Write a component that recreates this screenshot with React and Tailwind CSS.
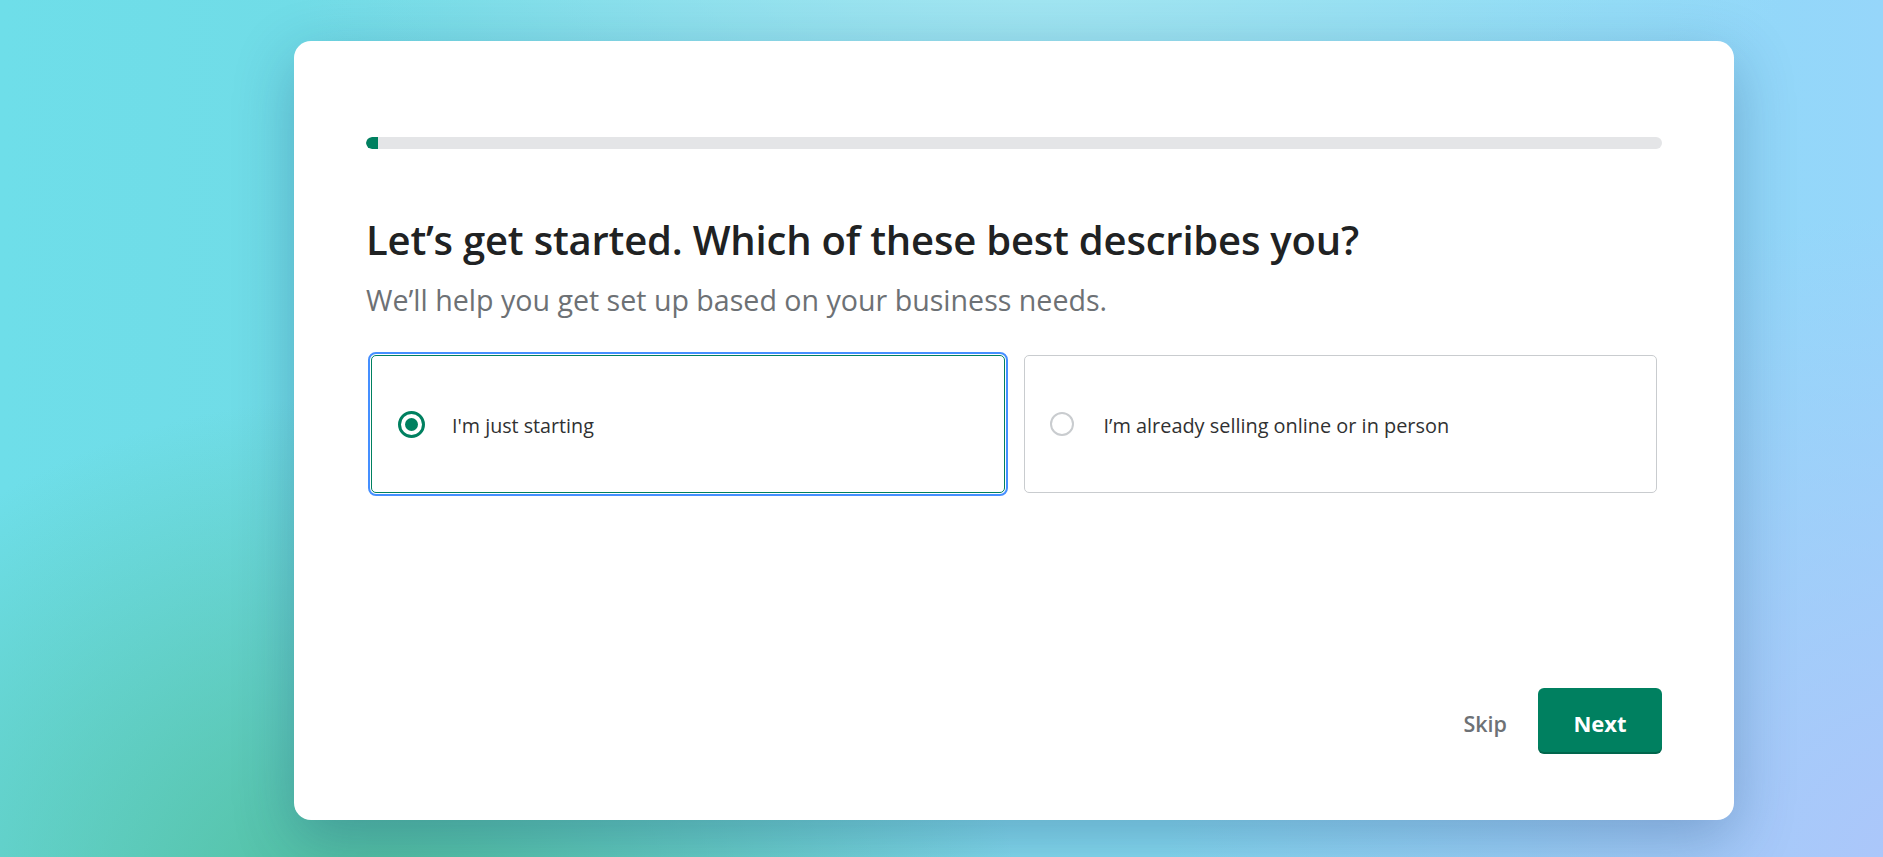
import React from "react";

export default function App() {
  const font = { fontFamily: '"Open Sans", "Noto Sans", sans-serif' };
  return (
    <div
      className="w-full h-[857px] overflow-hidden pt-[41px] pl-[294px] bg-[radial-gradient(ellipse_34%_60%_at_20%_106%,rgba(80,190,156,1),rgba(80,190,156,0.6)_40%,rgba(80,190,156,0)_100%),radial-gradient(ellipse_40%_75%_at_102%_100%,rgba(172,198,250,1),rgba(172,198,250,0)_100%),radial-gradient(ellipse_40%_40%_at_55%_-5%,rgba(168,232,242,0.9),rgba(168,232,242,0)_100%),linear-gradient(90deg,#6edee9_0%,#72dbe6_25%,#84daee_55%,#8cdaf7_80%,#96d6fa_100%)]"
      style={font}
    >
      <div className="w-[1440px] h-[779px] bg-white rounded-[17px] shadow-[0_18px_60px_rgba(20,60,110,0.3)] flex flex-col pt-[96px] px-[72px] pb-[66px]">
        {/* progress */}
        <div className="h-[12px] w-full rounded-full bg-[#e4e5e7] overflow-hidden">
          <div className="h-full w-[12px] rounded-l-full bg-[#008060]" />
        </div>

        <h1 className="mt-[67px] text-[40px] leading-[48px] font-semibold text-[#202223] tracking-[-0.005em]">
          Let’s get started. Which of these best describes you?
        </h1>
        <p className="mt-[18px] text-[28.6px] leading-[36px] text-[#6d7175]">
          We’ll help you get set up based on your business needs.
        </p>

        <div className="mt-[37px] px-[5px] grid grid-cols-2 gap-[19px]">
          <div className="h-[138px] rounded-[5px] border border-[#008060] outline-2 outline-offset-1 outline-[#458fff] flex items-center pl-[26px]">
            <div className="w-[27px] h-[27px] flex items-center justify-center">
              <div className="w-[27px] h-[27px] rounded-full border-[3px] border-[#008060] flex items-center justify-center">
                <div className="w-[13px] h-[13px] rounded-full bg-[#008060]" />
              </div>
            </div>
            <span className="ml-[27px] pt-[4px] text-[19.7px] text-[#303132]">I'm just starting</span>
          </div>
          <div className="h-[138px] rounded-[5px] border border-[#c9cccf] flex items-center pl-[25px]">
            <div className="w-[27px] h-[27px] flex items-center justify-start">
              <div className="w-[24px] h-[24px] rounded-full border-2 border-[#c9cccf]" />
            </div>
            <span className="ml-[27px] pt-[4px] text-[19.9px] text-[#303132]">I’m already selling online or in person</span>
          </div>
        </div>

        <div className="mt-auto flex justify-end items-center">
          <button className="text-[21.5px] font-semibold text-[#6d7175] mr-[31px] pt-[6px]">Skip</button>
          <button className="w-[124px] h-[66px] rounded-[6px] bg-[#008060] text-white text-[22px] font-bold pt-[5px] shadow-[inset_0_-2px_0_rgba(0,0,0,0.2)]">
            Next
          </button>
        </div>
      </div>
    </div>
  );
}
